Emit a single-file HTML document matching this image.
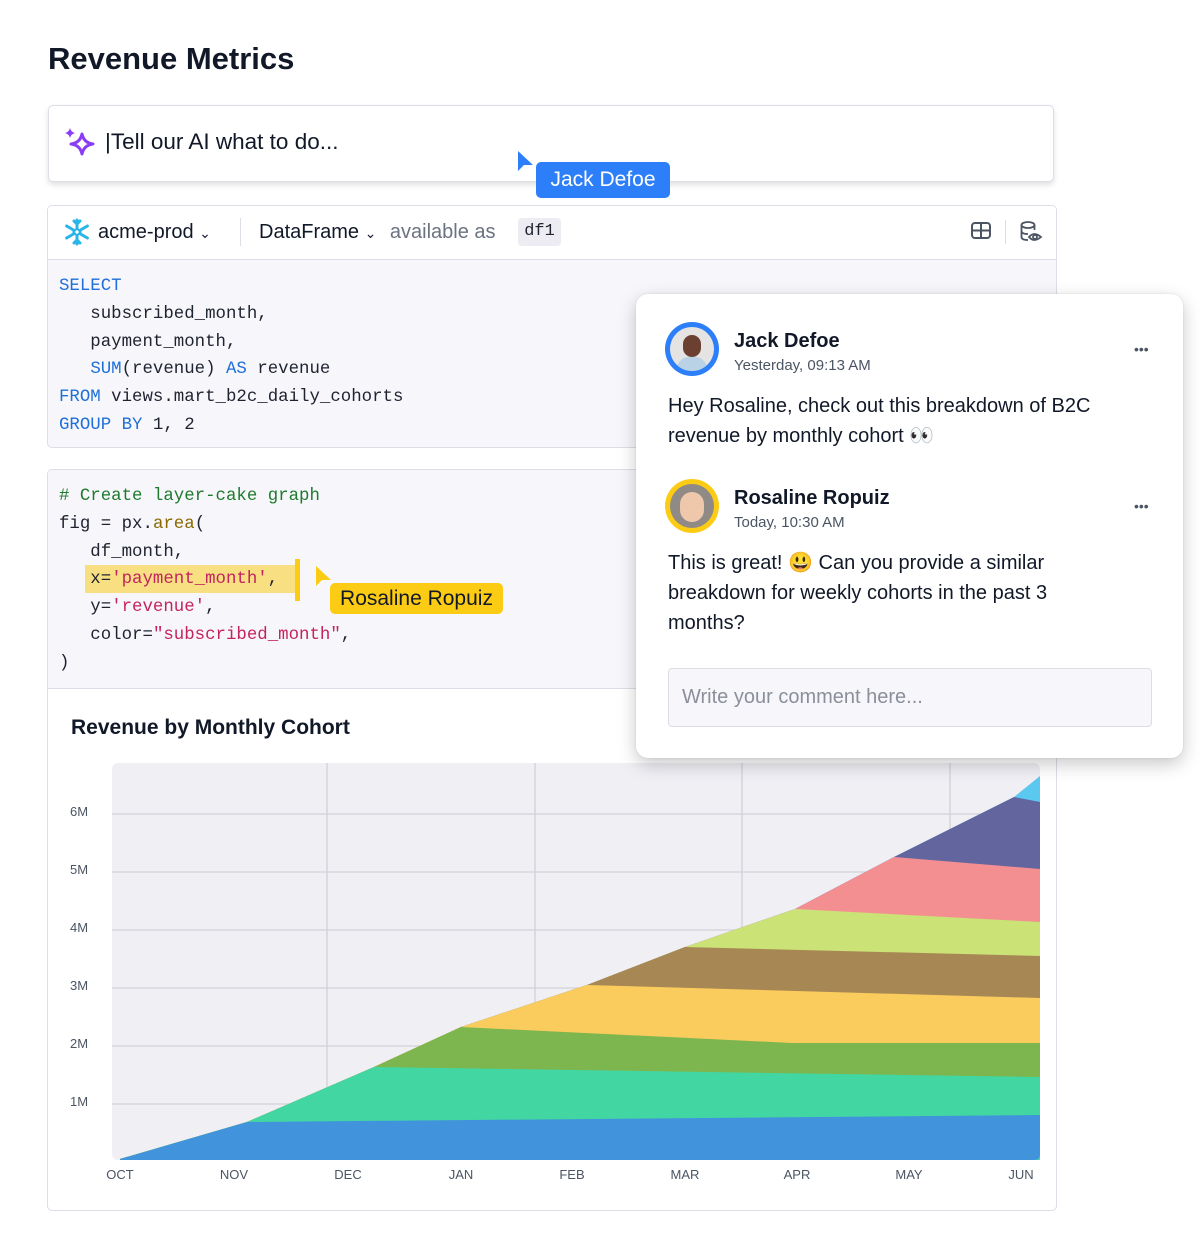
<!DOCTYPE html>
<html><head><meta charset="utf-8"><style>
*{box-sizing:border-box;margin:0;padding:0}
body{width:1200px;height:1257px;background:#fff;position:relative;overflow:hidden;font-family:"Liberation Sans",sans-serif;color:#111827}
.abs{position:absolute}
.mono{font-family:"Liberation Mono",monospace;font-size:17.4px;color:#1f2330}
.code div{height:27.8px;line-height:27.8px;white-space:pre}
.kw{color:#1e6fd9}.str{color:#c4245e}.fn{color:#8a6a00}.cm{color:#1f7a2e}
.dots{font-size:14px;color:#4b5563;letter-spacing:0px}
</style></head><body>
<div class="abs" style="left:48px;top:41px;font-size:31px;font-weight:bold;color:#111827">Revenue Metrics</div>

<div class="abs" style="left:48px;top:105px;width:1006px;height:77px;border:1px solid #dcdde5;border-radius:5px;box-shadow:0 3px 6px rgba(0,0,0,.12);background:#fff"></div>
<svg class="abs" style="left:62px;top:126px" width="36" height="34" viewBox="0 0 36 34">
<path d="M20 8 Q22 17 31 18 Q22 19 20 28 Q18 19 9 18 Q18 17 20 8Z" fill="none" stroke="#8b3df5" stroke-width="3" stroke-linejoin="round"/>
<path d="M8 2 Q9 6 13 7 Q9 8 8 12 Q7 8 3 7 Q7 6 8 2Z" fill="#8b3df5"/>
</svg>
<div class="abs" style="left:105px;top:129px;font-size:22.5px;color:#111827">|Tell our AI what to do...</div>
<svg class="abs" style="left:517px;top:150px" width="18" height="22"><path d="M1 1 L16 15 L7 15 L1 21Z" fill="#2d7ff9"/></svg>
<div class="abs" style="left:536px;top:162px;width:134px;height:36px;background:#2d7ff9;border-radius:5px;color:#fff;font-size:21px;line-height:36px;text-align:center">Jack Defoe</div>

<!-- SQL cell -->
<div class="abs" style="left:47px;top:205px;width:1010px;height:243px;border:1px solid #dcdde5;border-radius:5px;background:#f7f7fb;overflow:hidden">
 <div style="height:54px;background:#fff;border-bottom:1px solid #dcdde5"></div>
</div>
<svg class="abs" style="left:63px;top:218px" width="28" height="28" viewBox="0 0 28 28" stroke="#29b5e8" stroke-width="3" stroke-linecap="round" fill="none">
<path d="M14 2V10M14 18V26M3.6 8L10.5 12M17.5 16L24.4 20M3.6 20L10.5 16M17.5 12L24.4 8M11 3l3 3 3-3M11 25l3-3 3 3"/>
<rect x="11.5" y="11.5" width="5" height="5" transform="rotate(45 14 14)" stroke-width="2"/>
</svg>
<div class="abs" style="left:98px;top:221px;font-size:20px">acme-prod <span style="font-size:14px">&#8964;</span></div>
<div class="abs" style="left:240px;top:218px;width:1px;height:28px;background:#dcdde5"></div>
<div class="abs" style="left:259px;top:221px;font-size:20px">DataFrame <span style="font-size:14px">&#8964;</span> <span style="color:#6b7280;margin-left:8px">available as</span></div>
<div class="abs mono" style="left:518px;top:218px;width:43px;height:28px;background:#ececf2;border-radius:4px;line-height:28px;text-align:center;font-size:17px">df1</div>
<svg class="abs" style="left:970px;top:221px" width="22" height="20" viewBox="0 0 22 20" fill="none" stroke="#4b5563" stroke-width="2"><rect x="2" y="2" width="18" height="15" rx="3"/><path d="M2 9.5H20M11 2V17"/></svg>
<div class="abs" style="left:1005px;top:220px;width:1px;height:24px;background:#dcdde5"></div>
<svg class="abs" style="left:1019px;top:220px" width="24" height="24" viewBox="0 0 24 24" fill="none" stroke="#4b5563" stroke-width="1.8"><ellipse cx="9" cy="5" rx="6.5" ry="3"/><path d="M2.5 5V17Q2.5 20 9 20M2.5 11Q2.5 14 9 14M15.5 5V10"/><path d="M10 17Q15 11 22 17Q15 23 10 17Z"/><circle cx="16" cy="17" r="2"/></svg>

<div class="abs mono code" style="left:59px;top:273px">
<div><span class="kw">SELECT</span></div>
<div>   subscribed_month,</div>
<div>   payment_month,</div>
<div>   <span class="kw">SUM</span>(revenue) <span class="kw">AS</span> revenue</div>
<div><span class="kw">FROM</span> views.mart_b2c_daily_cohorts</div>
<div><span class="kw">GROUP BY</span> 1, 2</div>
</div>

<!-- python cell -->
<div class="abs" style="left:47px;top:469px;width:1010px;height:742px;border:1px solid #dcdde5;border-radius:5px;background:#fff;overflow:hidden">
 <div style="height:219px;background:#f7f7fb;border-bottom:1px solid #dcdde5"></div>
</div>
<div class="abs" style="left:85px;top:565px;width:211px;height:28px;background:#f7df82"></div>
<div class="abs" style="left:295px;top:559px;width:5px;height:42px;background:#fccc15"></div>
<div class="abs mono code" style="left:59px;top:483px">
<div><span class="cm"># Create layer-cake graph</span></div>
<div>fig = px.<span class="fn">area</span>(</div>
<div>   df_month,</div>
<div>   x=<span class="str">'payment_month'</span>,</div>
<div>   y=<span class="str">'revenue'</span>,</div>
<div>   color=<span class="str">"subscribed_month"</span>,</div>
<div>)</div>
</div>
<svg class="abs" style="left:315px;top:565px" width="18" height="22"><path d="M1 1 L16 15 L7 15 L1 21Z" fill="#fccc15"/></svg>
<div class="abs" style="left:330px;top:583px;width:173px;height:31px;background:#fccc15;border-radius:5px;color:#111827;font-size:21px;line-height:31px;text-align:center">Rosaline Ropuiz</div>

<div class="abs" style="left:71px;top:716px;font-size:21px;font-weight:bold">Revenue by Monthly Cohort</div>

<svg class="abs" style="left:0;top:0" width="1200" height="1257">
<rect x="112" y="763" width="928" height="397" rx="6" fill="#efeff4"/>
<g stroke="#d0d1d8" stroke-width="1.3">
<path d="M112 814H1040M112 872H1040M112 930H1040M112 988H1040M112 1046H1040M112 1104H1040M327 763V1160M535 763V1160M742 763V1160M950 763V1160"/>
</g>
<g font-family="Liberation Sans" font-size="13" fill="#4b5563">
<text x="70" y="816">6M</text><text x="70" y="874">5M</text><text x="70" y="932">4M</text><text x="70" y="990">3M</text><text x="70" y="1048">2M</text><text x="70" y="1106">1M</text>
<g text-anchor="middle"><text x="120" y="1179">OCT</text><text x="234" y="1179">NOV</text><text x="348" y="1179">DEC</text><text x="461" y="1179">JAN</text><text x="572" y="1179">FEB</text><text x="685" y="1179">MAR</text><text x="797" y="1179">APR</text><text x="909" y="1179">MAY</text><text x="1021" y="1179">JUN</text></g>
</g>
<polygon fill="#5bc8ef" points="120,1159 247,1122 374,1067 461,1027 587,985 685,947 795,909 894,857 1014,797 1040,776 1040,1160"/>
<polygon fill="#63659f" points="120,1159 247,1122 374,1067 461,1027 587,985 685,947 795,909 894,857 1014,797 1040,802 1040,1160"/>
<polygon fill="#f48f91" points="120,1159 247,1122 374,1067 461,1027 587,985 685,947 795,909 894,857 1040,869 1040,1160"/>
<polygon fill="#cbe277" points="120,1159 247,1122 374,1067 461,1027 587,985 685,947 795,909 1040,922 1040,1160"/>
<polygon fill="#a78753" points="120,1159 247,1122 374,1067 461,1027 587,985 685,947 1040,956 1040,1160"/>
<polygon fill="#facb5d" points="120,1159 247,1122 374,1067 461,1027 587,985 1040,998 1040,1160"/>
<polygon fill="#7db64e" points="120,1159 247,1122 374,1067 461,1027 792,1043 1040,1043 1040,1160"/>
<polygon fill="#42d6a2" points="120,1159 247,1122 374,1067 1040,1077 1040,1160"/>
<path fill="#4194db" d="M120 1159 L247 1122 L1040 1115 L1040 1154 Q1040 1160 1034 1160 L120 1160Z"/>
</svg>

<!-- comment card -->
<div class="abs" style="left:636px;top:294px;width:547px;height:464px;background:#fff;border-radius:12px;box-shadow:0 6px 18px rgba(0,0,0,.22),0 0 2px rgba(0,0,0,.1)">
 <div class="abs" style="left:29px;top:28px;width:54px;height:54px;border-radius:50%;background:#2d7ff9;padding:5px"><div style="width:44px;height:44px;border-radius:50%;background:#e5e4e2;overflow:hidden;position:relative"><div style="position:absolute;left:13px;top:8px;width:18px;height:22px;border-radius:9px;background:#6b4030"></div><div style="position:absolute;left:7px;top:30px;width:30px;height:20px;border-radius:12px 12px 0 0;background:#b9d2e6"></div></div></div>
 <div class="abs" style="left:98px;top:36px;font-size:20px;font-weight:bold">Jack Defoe</div>
 <div class="abs" style="left:98px;top:63px;font-size:15px;color:#4b5563">Yesterday, 09:13 AM</div>
 <div class="abs dots" style="left:498px;top:47px">•••</div>
 <div class="abs" style="left:32px;top:97px;width:470px;font-size:20px;line-height:30px">Hey Rosaline, check out this breakdown of B2C revenue by monthly cohort 👀</div>
 <div class="abs" style="left:29px;top:185px;width:54px;height:54px;border-radius:50%;background:#fccc15;padding:5px"><div style="width:44px;height:44px;border-radius:50%;background:#8f8a86;overflow:hidden;position:relative"><div style="position:absolute;left:10px;top:8px;width:24px;height:30px;border-radius:12px;background:#efc8ac"></div></div></div>
 <div class="abs" style="left:98px;top:193px;font-size:20px;font-weight:bold">Rosaline Ropuiz</div>
 <div class="abs" style="left:98px;top:220px;font-size:15px;color:#4b5563">Today, 10:30 AM</div>
 <div class="abs dots" style="left:498px;top:204px">•••</div>
 <div class="abs" style="left:32px;top:254px;width:460px;font-size:20px;line-height:30px">This is great! 😃 Can you provide a similar breakdown for weekly cohorts in the past 3 months?</div>
 <div class="abs" style="left:32px;top:374px;width:484px;height:59px;border:1px solid #dcdde5;border-radius:4px;background:#f7f7fb;font-size:20px;color:#8a8f99;line-height:57px;padding-left:13px">Write your comment here...</div>
</div>
</body></html>
